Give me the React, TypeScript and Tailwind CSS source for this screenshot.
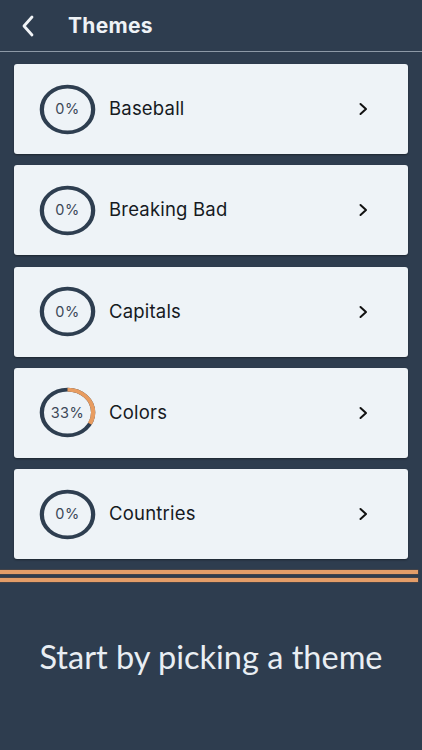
const themes = [
  { name: 'Baseball', progress: 0 },
  { name: 'Breaking Bad', progress: 0 },
  { name: 'Capitals', progress: 0 },
  { name: 'Colors', progress: 33 },
  { name: 'Countries', progress: 0 },
];

function ProgressRing({ value }: { value: number }) {
  const r = 45;
  const c = 2 * Math.PI * r;
  return (
    <div className="relative w-[57px] h-[51px] shrink-0">
      <svg viewBox="0 0 100 100" preserveAspectRatio="none" className="absolute inset-0 w-full h-full">
        <circle cx="50" cy="50" r={r} fill="none" stroke="#2e3e50" strokeWidth="7.5" />
        {value > 0 && (
          <circle
            cx="50"
            cy="50"
            r={r}
            fill="none"
            stroke="#e89c60"
            strokeWidth="7.5"
            strokeDasharray={`${(c * value) / 100} ${c}`}
            transform="rotate(-90 50 50)"
          />
        )}
      </svg>
      <div className="absolute inset-0 flex items-center justify-center text-[14.5px] text-[#3c4858] tracking-[0.5px]">
        {value}%
      </div>
    </div>
  );
}

export default function App() {
  return (
    <div className="w-[422px] h-[750px] bg-[#2e3d4f] flex flex-col overflow-hidden" style={{ fontFamily: 'Inter, "Noto Sans", sans-serif' }}>
      {/* Header */}
      <div className="h-[52px] flex items-center border-b border-[#8d99a6] shrink-0 pt-[1px]">
        <svg width="14" height="22" viewBox="0 0 14 22" className="ml-[21px]">
          <polyline points="11,2 3,11 11,20" fill="none" stroke="#f1f4f7" strokeWidth="2.8" strokeLinecap="round" strokeLinejoin="round" />
        </svg>
        <span className="ml-[33px] text-[21px] font-bold text-[#eef2f6] tracking-[0.3px]">Themes</span>
      </div>

      {/* List */}
      <div className="flex flex-col gap-[11.25px] px-[14px] pt-[12px]">
        {themes.map((t) => (
          <div key={t.name} className="h-[90px] bg-[#eef3f7] rounded-[3px] shadow-[0_1px_2px_rgba(0,0,0,0.4)] flex items-center pl-[25px] pr-[40px]">
            <ProgressRing value={t.progress} />
            <span className="ml-[13px] text-[18.5px] text-[#161a1f] flex-1 tracking-[0.2px]">{t.name}</span>
            <svg width="10" height="14" viewBox="0 0 10 14">
              <polyline points="2.5,2 8,7 2.5,12" fill="none" stroke="#111" strokeWidth="2" strokeLinecap="round" strokeLinejoin="round" />
            </svg>
          </div>
        ))}
      </div>

      {/* Divider lines */}
      <div className="mt-[11px] w-[418px] flex flex-col gap-[4px]">
        <div className="h-[4px] bg-[#e39d68] shadow-[0_0_0_0.5px_#5a4a42]" />
        <div className="h-[4px] bg-[#e39d68] shadow-[0_0_0_0.5px_#5a4a42]" />
      </div>

      {/* Footer */}
      <div className="flex-1 flex justify-center pt-[51px]">
        <span className="text-[32.5px] text-[#e9eef3]" style={{ fontFamily: 'Lato, "Open Sans", sans-serif' }}>
          Start by picking a theme
        </span>
      </div>
    </div>
  );
}
